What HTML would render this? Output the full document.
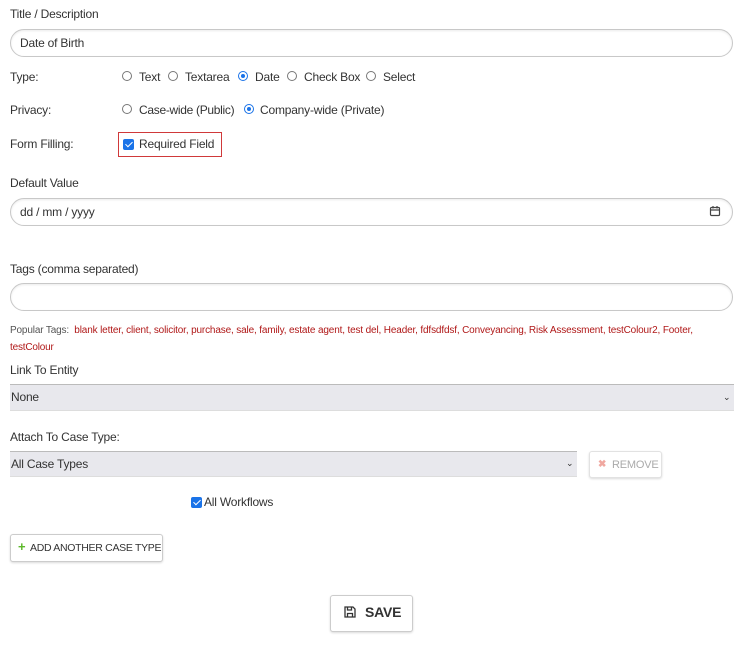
<!DOCTYPE html>
<html><head><meta charset="utf-8"><style>
*{box-sizing:border-box;margin:0;padding:0}
body{width:750px;height:660px;background:#fff;font-family:"Liberation Sans",sans-serif;color:#333;font-size:12px;position:relative;overflow:hidden;letter-spacing:-0.2px}
.a{position:absolute;white-space:nowrap;line-height:14px}
.inp{position:absolute;left:10px;width:723px;height:28px;border:1px solid #c8c8c8;border-radius:14px;box-shadow:inset 0 1px 2px rgba(0,0,0,.08)}
.r{position:absolute;width:10px;height:10px;border:1px solid #777;border-radius:50%}
.r.on{border:1px solid #1a73e8}
.r.on:after{content:"";position:absolute;left:2px;top:2px;width:4px;height:4px;border-radius:50%;background:#1a73e8}
.cb{position:absolute;width:11px;height:11px;background:#1a73e8;border-radius:2px}
.cb:after{content:"";position:absolute;left:3.5px;top:1px;width:3px;height:6px;border:solid #fff;border-width:0 1.5px 1.5px 0;transform:rotate(45deg)}
.sel{position:absolute;left:10px;background:#e8e8ed;border-top:1px solid #bbb;border-bottom:1px solid #ddd}
.btn{position:absolute;border:1px solid #ccc;border-radius:3px;background:#fff;box-shadow:0 1px 2px rgba(0,0,0,.15)}
.tag{color:#b01818}
</style></head><body>
<div class="a" style="left:10px;top:7px">Title / Description</div>
<div class="inp" style="top:29px"></div>
<div class="a" style="left:20px;top:36px">Date of Birth</div>

<div class="a" style="left:10px;top:70px">Type:</div>
<div class="r" style="left:122px;top:71px"></div><div class="a" style="left:139px;top:70px">Text</div>
<div class="r" style="left:168px;top:71px"></div><div class="a" style="left:185px;top:70px">Textarea</div>
<div class="r on" style="left:238px;top:71px"></div><div class="a" style="left:255px;top:70px">Date</div>
<div class="r" style="left:287px;top:71px"></div><div class="a" style="left:304px;top:70px;letter-spacing:-0.2px">Check Box</div>
<div class="r" style="left:366px;top:71px"></div><div class="a" style="left:383px;top:70px">Select</div>

<div class="a" style="left:10px;top:103px">Privacy:</div>
<div class="r" style="left:122px;top:104px"></div><div class="a" style="left:139px;top:103px;letter-spacing:-0.3px">Case-wide (Public)</div>
<div class="r on" style="left:244px;top:104px"></div><div class="a" style="left:260px;top:103px;letter-spacing:-0.2px">Company-wide (Private)</div>

<div class="a" style="left:10px;top:137px">Form Filling:</div>
<div style="position:absolute;left:118px;top:132px;width:104px;height:25px;border:1.5px solid #d0393a"></div>
<div class="cb" style="left:123px;top:139px"></div><div class="a" style="left:139px;top:137px">Required Field</div>

<div class="a" style="left:10px;top:176px">Default Value</div>
<div class="inp" style="top:198px"></div>
<div class="a" style="left:20px;top:205px">dd / mm / yyyy</div>
<svg style="position:absolute;left:709px;top:205px" width="12" height="12" viewBox="0 0 12 12" fill="none" stroke="#444" stroke-width="1.2"><rect x="1.5" y="2.5" width="9" height="8" rx="1"/><path d="M1.5 5h9M4 1v2.5M8 1v2.5"/></svg>

<div class="a" style="left:10px;top:262px">Tags (comma separated)</div>
<div class="inp" style="top:283px"></div>

<div class="a" style="left:10px;top:324px;font-size:10px;letter-spacing:-0.15px"><span style="color:#555">Popular Tags:</span>&nbsp;&nbsp;<span class="tag">blank letter, client, solicitor, purchase, sale, family, estate agent, test del, Header, fdfsdfdsf, Conveyancing, Risk Assessment, testColour2, Footer,</span></div>
<div class="a tag" style="left:10px;top:341px;font-size:10px">testColour</div>

<div class="a" style="left:10px;top:363px">Link To Entity</div>
<div class="sel" style="top:384px;width:724px;height:27px"></div>
<div class="a" style="left:11px;top:390px">None</div>
<div class="a" style="left:723px;top:390px;font-size:9px">&#8964;</div>

<div class="a" style="left:10px;top:430px">Attach To Case Type:</div>
<div class="sel" style="top:451px;width:567px;height:26px"></div>
<div class="a" style="left:11px;top:457px">All Case Types</div>
<div class="a" style="left:566px;top:456px;font-size:9px">&#8964;</div>
<div class="btn" style="left:589px;top:451px;width:73px;height:27px;border-color:#e2e2e2"></div>
<div class="a" style="left:598px;top:458px;font-size:10px;color:#f0a8a0;font-weight:bold">✖</div>
<div class="a" style="left:612px;top:458px;font-size:11px;color:#aaa;letter-spacing:-0.2px">REMOVE</div>

<div class="cb" style="left:191px;top:497px"></div><div class="a" style="left:204px;top:495px">All Workflows</div>

<div class="btn" style="left:10px;top:534px;width:153px;height:28px"></div>
<div class="a" style="left:18px;top:540px;color:#5cb82a;font-weight:bold;font-size:13px">+</div>
<div class="a" style="left:30px;top:541px;font-size:10.5px;letter-spacing:-0.3px">ADD ANOTHER CASE TYPE</div>

<div class="btn" style="left:330px;top:595px;width:83px;height:37px"></div>
<svg style="position:absolute;left:344px;top:606px" width="12" height="12" viewBox="0 0 12 12" fill="none" stroke="#333" stroke-width="1.3"><path d="M1 1h8l2 2v8H1z"/><path d="M3.5 1v3h4V1M3.5 11V7.5h5V11"/></svg>
<div class="a" style="left:365px;top:605px;font-size:14px;font-weight:bold;color:#333">SAVE</div>
</body></html>
